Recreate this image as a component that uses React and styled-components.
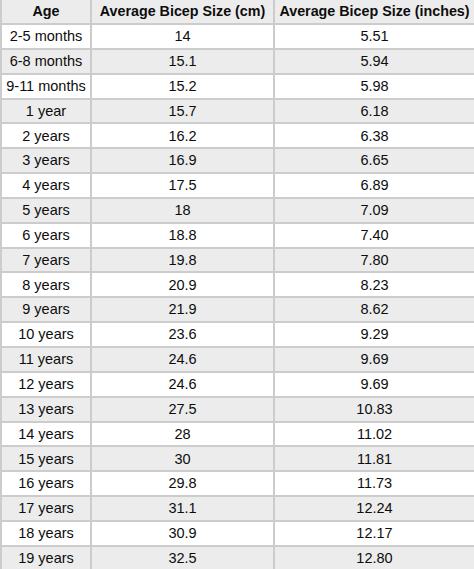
import React from "react";
import styled, { createGlobalStyle } from "styled-components";

const Global = createGlobalStyle`
  html, body { margin: 0; padding: 0; background: #ffffff; }
  body { font-family: "Liberation Sans", Arial, sans-serif; }
`;

const rows = [
  ["2-5 months", "14", "5.51"],
  ["6-8 months", "15.1", "5.94"],
  ["9-11 months", "15.2", "5.98"],
  ["1 year", "15.7", "6.18"],
  ["2 years", "16.2", "6.38"],
  ["3 years", "16.9", "6.65"],
  ["4 years", "17.5", "6.89"],
  ["5 years", "18", "7.09"],
  ["6 years", "18.8", "7.40"],
  ["7 years", "19.8", "7.80"],
  ["8 years", "20.9", "8.23"],
  ["9 years", "21.9", "8.62"],
  ["10 years", "23.6", "9.29"],
  ["11 years", "24.6", "9.69"],
  ["12 years", "24.6", "9.69"],
  ["13 years", "27.5", "10.83"],
  ["14 years", "28", "11.02"],
  ["15 years", "30", "11.81"],
  ["16 years", "29.8", "11.73"],
  ["17 years", "31.1", "12.24"],
  ["18 years", "30.9", "12.17"],
  ["19 years", "32.5", "12.80"],
];

const Table = styled.div`
  width: 474px;
  height: 569px;
  overflow: hidden;
  box-sizing: border-box;
  padding-left: 2px;
  background: #cccccc;
  display: grid;
  grid-template-columns: 88px 181px 1fr;
  grid-template-rows: 23px repeat(22, 22.85px);
  column-gap: 2px;
  row-gap: 2px;
`;

const Cell = styled.div`
  background: ${(p) => (p.$shaded ? "#ececec" : "#ffffff")};
  color: #0d0d0d;
  font-size: ${(p) => (p.$head ? "14.3px" : "14.5px")};
  font-weight: ${(p) => (p.$head ? 700 : 400)};
  display: flex;
  align-items: center;
  justify-content: center;
  white-space: nowrap;
  line-height: 1;
`;

export default function App() {
  return (
    <>
      <Global />
      <Table>
        <Cell $head $shaded>Age</Cell>
        <Cell $head $shaded>Average Bicep Size (cm)</Cell>
        <Cell $head $shaded>Average Bicep Size (inches)</Cell>
        {rows.map((r, i) =>
          r.map((v, j) => (
            <Cell key={`${i}-${j}`} $shaded={i % 2 === 1}>
              {v}
            </Cell>
          ))
        )}
      </Table>
    </>
  );
}
